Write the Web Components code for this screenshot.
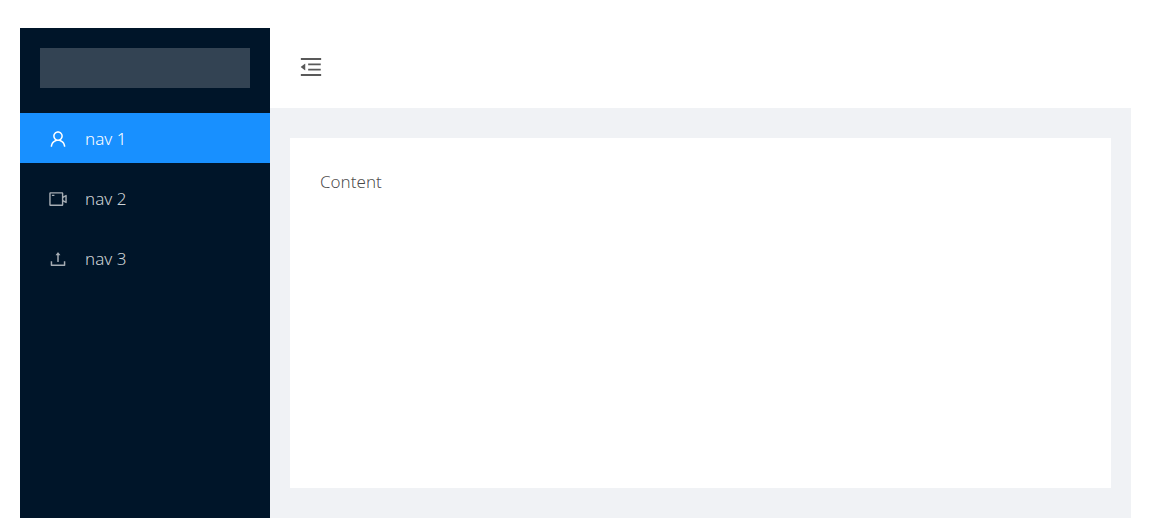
<!DOCTYPE html>
<html lang="en">
<head>
<meta charset="utf-8">
<title>Admin layout</title>
<style>
  html, body { margin: 0; height: 100%; background: #fff; }
  body { font-family: "Noto Sans", "Liberation Sans", sans-serif; font-weight: 300; }
</style>
</head>
<body>
<app-layout>
  <app-sider slot="sider">
    <nav-item icon="user" active>nav 1</nav-item>
    <nav-item icon="video">nav 2</nav-item>
    <nav-item icon="upload">nav 3</nav-item>
  </app-sider>
  <app-header slot="header"></app-header>
  <app-content slot="content">Content</app-content>
</app-layout>

<script>
const ICONS = {
    user: '<path d="M858.5 763.6a374 374 0 0 0-80.6-119.5 375.63 375.63 0 0 0-119.5-80.6c-.4-.2-.8-.3-1.2-.5C719.5 518 760 444.7 760 362c0-137-111-248-248-248S264 225 264 362c0 82.7 40.5 156 102.8 201.1-.4.2-.8.3-1.2.5-44.8 18.9-85 46-119.5 80.6a375.63 375.63 0 0 0-80.6 119.5A371.7 371.7 0 0 0 136 901.8a8 8 0 0 0 8 8.2h60c4.4 0 7.9-3.5 8-7.8 2-77.2 33-149.5 87.8-204.3 56.7-56.7 132-87.9 212.2-87.9s155.5 31.2 212.2 87.9C779 752.7 810 825 812 902.2c.1 4.4 3.6 7.8 8 7.8h60a8 8 0 0 0 8-8.2c-1-47.8-10.9-94.3-29.5-138.2zM512 534c-45.9 0-89.1-17.9-121.6-50.4S340 407.9 340 362c0-45.9 17.9-89.1 50.4-121.6S466.1 190 512 190s89.1 17.9 121.6 50.4S684 316.1 684 362c0 45.9-17.9 89.1-50.4 121.6S557.9 534 512 534z"/>',
    video: '<path d="M912 302.3L784 376V224c0-35.3-28.7-64-64-64H128c-35.3 0-64 28.7-64 64v576c0 35.3 28.7 64 64 64h592c35.3 0 64-28.7 64-64V648l128 73.7c21.3 12.3 48-3.1 48-27.6V330c0-24.6-26.7-40-48-27.7zM712 792H136V232h576v560zm176-167l-104-59.8V458.9L888 399v226zM208 360h112c4.4 0 8-3.6 8-8v-48c0-4.4-3.6-8-8-8H208c-4.4 0-8 3.6-8 8v48c0 4.4 3.6 8 8 8z"/>',
    upload: '<path d="M400 317.7h73.9V656c0 4.4 3.6 8 8 8h60c4.4 0 8-3.6 8-8V317.7H624c6.7 0 10.4-7.7 6.3-12.9L518.3 163a8 8 0 0 0-12.6 0l-112 141.7c-4.1 5.3-.4 13 6.3 13zM878 626h-60c-4.4 0-8 3.6-8 8v154H214V634c0-4.4-3.6-8-8-8h-60c-4.4 0-8 3.6-8 8v198c0 17.7 14.3 32 32 32h684c17.7 0 32-14.3 32-32V634c0-4.4-3.6-8-8-8z"/>',
    indent: '<path d="M408 442h480c4.4 0 8-3.6 8-8v-56c0-4.4-3.6-8-8-8H408c-4.4 0-8 3.6-8 8v56c0 4.4 3.6 8 8 8zm-8 204c0 4.4 3.6 8 8 8h480c4.4 0 8-3.6 8-8v-56c0-4.4-3.6-8-8-8H408c-4.4 0-8 3.6-8 8v56zm504-486H120c-4.4 0-8 3.6-8 8v56c0 4.4 3.6 8 8 8h784c4.4 0 8-3.6 8-8v-56c0-4.4-3.6-8-8-8zm0 632H120c-4.4 0-8 3.6-8 8v56c0 4.4 3.6 8 8 8h784c4.4 0 8-3.6 8-8v-56c0-4.4-3.6-8-8-8zM115.4 518.9L271.7 642c5.8 4.6 14.4.5 14.4-6.9V388.9c0-7.4-8.5-11.5-14.4-6.9L115.4 505.1a8.74 8.74 0 0 0 0 13.8z"/>'
};

const iconSvg = (name, size) =>
    `<svg width="${size}" height="${size}" viewBox="0 0 1024 1024" fill="currentColor" aria-hidden="true">${ICONS[name]}</svg>`;

class AppLayout extends HTMLElement {
    connectedCallback() {
        const shadow = this.attachShadow({mode: "open"});
        shadow.innerHTML = `
        <style>
            :host {
                display: grid;
                grid-template-columns: 250px 1fr;
                grid-template-rows: 80px 1fr;
                box-sizing: border-box;
                height: 100vh;
                padding: 28px 26px 10px 20px;
            }
            .sider { grid-row: 1 / 3; display: flex; }
        </style>
        <div class="sider"><slot name="sider"></slot></div>
        <slot name="header"></slot>
        <slot name="content"></slot>
        `;
    }
}

class AppSider extends HTMLElement {
    connectedCallback() {
        const shadow = this.attachShadow({mode: "open"});
        shadow.innerHTML = `
        <style>
            :host {
                display: block;
                flex: 1;
                background: #001529;
            }
            .logo {
                height: 40px;
                margin: 20px;
                background: rgba(255, 255, 255, 0.2);
            }
            nav {
                display: flex;
                flex-direction: column;
                gap: 10px;
                margin-top: 25px;
            }
        </style>
        <div class="logo"></div>
        <nav><slot></slot></nav>
        `;
    }
}

class NavItem extends HTMLElement {
    connectedCallback() {
        const shadow = this.attachShadow({mode: "open"});
        shadow.innerHTML = `
        <style>
            :host {
                display: flex;
                align-items: center;
                gap: 17px;
                box-sizing: border-box;
                height: 50px;
                padding: 2px 0 0 28px;
                font-size: 17px;
                color: rgba(255, 255, 255, 0.65);
            }
            :host([active]) {
                background: #1890ff;
                color: #fff;
            }
            svg { display: block; flex: none; }
            /* light face renders thinner here, so the label gets a brighter colour */
            span { margin-top: -2px; color: rgba(255, 255, 255, 0.82); }
            :host([active]) span { color: #fff; }
        </style>
        ${iconSvg(this.getAttribute("icon"), 20)}
        <span><slot></slot></span>
        `;
    }
}

class AppHeader extends HTMLElement {
    connectedCallback() {
        const shadow = this.attachShadow({mode: "open"});
        shadow.innerHTML = `
        <style>
            :host {
                display: flex;
                align-items: center;
                padding: 0 0 2px 28px;
                background: #fff;
                color: rgba(0, 0, 0, 0.65);
            }
            svg { display: block; }
        </style>
        ${iconSvg("indent", 26)}
        `;
    }
}

class AppContent extends HTMLElement {
    connectedCallback() {
        const shadow = this.attachShadow({mode: "open"});
        shadow.innerHTML = `
        <style>
            :host {
                display: block;
                background: #f0f2f5;
                padding: 30px 20px;
                color: rgba(0, 0, 0, 0.72);
                font-size: 17px;
            }
            .card {
                box-sizing: border-box;
                height: 100%;
                padding: 30px;
                background: #fff;
                line-height: 28px;
            }
        </style>
        <div class="card"><slot></slot></div>
        `;
    }
}

customElements.define('app-layout', AppLayout);
customElements.define('app-sider', AppSider);
customElements.define('nav-item', NavItem);
customElements.define('app-header', AppHeader);
customElements.define('app-content', AppContent);
</script>
</body>
</html>
